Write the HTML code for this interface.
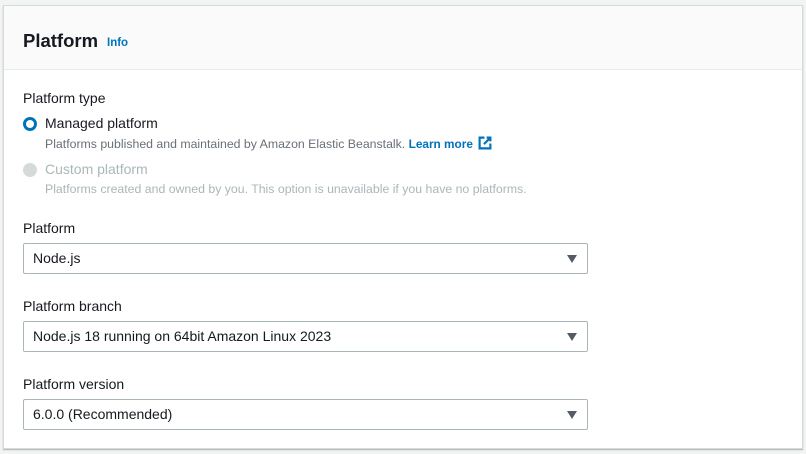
<!DOCTYPE html>
<html><head><style>
body{margin:0;width:806px;height:454px;background:#f2f3f3;font-family:"Liberation Sans",sans-serif;position:relative;overflow:hidden;color:#16191f}
.panel{position:absolute;left:3px;top:5px;width:798px;height:442px;background:#fff;border:1px solid #d5dbdb;box-shadow:0 1px 1px rgba(0,28,36,.3)}
.hdr{position:absolute;left:0;top:0;right:0;height:63px;background:#fafafa;border-bottom:1px solid #eaeded}
.a{position:absolute;white-space:nowrap}
.sel{position:absolute;left:19px;width:565px;height:31px;border:1px solid #aab7b8;border-radius:2px;background:#fff;font-size:14px;line-height:29px;box-sizing:border-box;padding-left:9px}
.sel:after{content:"";position:absolute;right:10px;top:11px;border-left:5px solid transparent;border-right:5px solid transparent;border-top:8px solid #545b64}
.lbl{font-size:14px}
.desc{font-size:12.3px;color:#687078}
</style></head><body>
<div class="panel">
<div class="hdr"></div>
<div class="a" style="left:19px;top:24px;font-size:18.5px;font-weight:bold">Platform</div>
<div class="a" style="left:103px;top:31px;font-size:11.5px;font-weight:bold;color:#0073bb">Info</div>
<div class="a lbl" style="left:19px;top:84px">Platform type</div>
<div class="a" style="left:19px;top:111px;width:8px;height:8px;border-radius:50%;border:3px solid #0073bb;background:#fff"></div>
<div class="a lbl" style="left:41px;top:109px">Managed platform</div>
<div class="a desc" style="left:41px;top:130px">Platforms published and maintained by Amazon Elastic Beanstalk. <span style="color:#0073bb;font-weight:bold;font-size:11.8px">Learn more</span>
<svg width="14" height="14" viewBox="0 0 13 13" style="vertical-align:-2px;margin-left:2px"><path d="M6 1.5H1.5v10h10V7M8 1.5h3.5V5M11.5 1.5L5.5 7.5" fill="none" stroke="#0073bb" stroke-width="2"/></svg></div>
<div class="a" style="left:19px;top:157px;width:14px;height:14px;border-radius:50%;background:#d5dbdb"></div>
<div class="a lbl" style="left:41px;top:155px;color:#aab7b8">Custom platform</div>
<div class="a desc" style="left:41px;top:176px;color:#aab7b8">Platforms created and owned by you. This option is unavailable if you have no platforms.</div>
<div class="a lbl" style="left:19px;top:214px">Platform</div>
<div class="sel" style="top:237px">Node.js</div>
<div class="a lbl" style="left:19px;top:292px">Platform branch</div>
<div class="sel" style="top:315px">Node.js 18 running on 64bit Amazon Linux 2023</div>
<div class="a lbl" style="left:19px;top:370px">Platform version</div>
<div class="sel" style="top:393px">6.0.0 (Recommended)</div>
</div>
</body></html>
